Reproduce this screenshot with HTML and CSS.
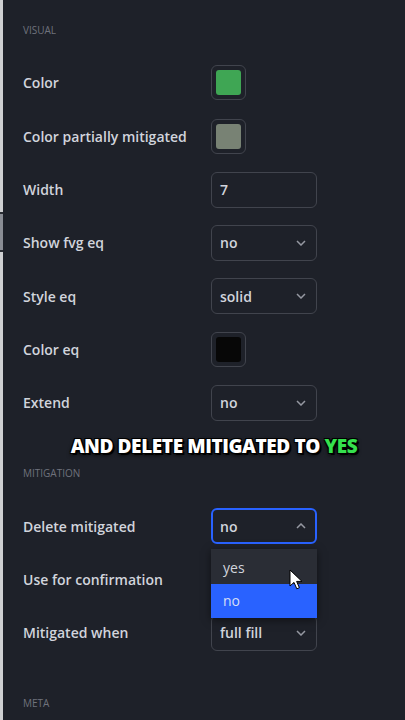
FILE: index.html
```html
<!DOCTYPE html>
<html>
<head>
<meta charset="utf-8">
<link rel="stylesheet" href="styles.css">
</head>
<body>
<div class="edge"><span class="edge-mark"></span></div>
<main class="panel">
  <section class="section">
    <div class="section-title">Visual</div>
    <div class="row"><span class="label">Color</span><span class="swatch"><span class="chip chip-green"></span></span></div>
    <div class="row"><span class="label">Color partially mitigated</span><span class="swatch"><span class="chip chip-grey"></span></span></div>
    <div class="row"><span class="label">Width</span><span class="field">7</span></div>
    <div class="row"><span class="label">Show fvg eq</span><span class="field select">no<svg class="chev" viewBox="0 0 10 6"><path d="M1 1l4 4 4-4"/></svg></span></div>
    <div class="row"><span class="label">Style eq</span><span class="field select">solid<svg class="chev" viewBox="0 0 10 6"><path d="M1 1l4 4 4-4"/></svg></span></div>
    <div class="row"><span class="label">Color eq</span><span class="swatch"><span class="chip chip-black"></span></span></div>
    <div class="row"><span class="label">Extend</span><span class="field select">no<svg class="chev" viewBox="0 0 10 6"><path d="M1 1l4 4 4-4"/></svg></span></div>
  </section>
  <section class="section">
    <div class="section-title">Mitigation</div>
    <div class="row"><span class="label">Delete mitigated</span>
      <span class="control">
        <span class="field select focused">no<svg class="chev" viewBox="0 0 10 6"><path d="M1 5l4-4 4 4"/></svg></span>
        <span class="menu">
          <span class="opt hover">yes</span>
          <span class="opt sel">no</span>
          <svg class="cursor" viewBox="0 0 14 21"><path d="M1 1v16l4-3.6 2.8 6.4 2.6-1.1-2.8-6.3h5.4z"/></svg>
        </span>
      </span>
    </div>
    <div class="row"><span class="label">Use for confirmation</span><span class="field select"></span></div>
    <div class="row"><span class="label">Mitigated when</span><span class="field select">full fill<svg class="chev" viewBox="0 0 10 6"><path d="M1 1l4 4 4-4"/></svg></span></div>
  </section>
  <section class="section">
    <div class="section-title">Meta</div>
  </section>
</main>
<div class="caption">AND DELETE MITIGATED TO <span class="yes">YES</span></div>
</body>
</html>
```
FILE: styles.css
```css
html, body {
  margin: 0;
  padding: 0;
  height: 720px;
  overflow: hidden;
  background: #1e2129;
}
body {
  font-family: "Open Sans", "DejaVu Sans", sans-serif;
  color: #d1d4dc;
  position: relative;
}
.edge {
  position: absolute;
  left: 0;
  top: 0;
  width: 3px;
  height: 720px;
  background: #cfd0d2;
}
.edge-mark {
  position: absolute;
  left: 0;
  top: 212px;
  width: 3px;
  height: 36px;
  background: #8a8d94;
  border-top: 2px solid #2a2d33;
  border-bottom: 2px solid #2a2d33;
}
.panel {
  padding: 22px 0 0 23px;
}
.section + .section {
  margin-top: 35.5px;
}
.section-title {
  font-size: 10px;
  line-height: 16px;
  height: 16px;
  text-transform: uppercase;
  color: #6f727c;
  margin-bottom: 18.33px;
}
.row {
  height: 53.33px;
  display: flex;
  align-items: center;
}
.label {
  width: 188px;
  font-size: 14px;
  font-weight: 600;
  color: #d1d4dc;
  white-space: nowrap;
}
.swatch {
  width: 35px;
  height: 35px;
  box-sizing: border-box;
  border: 1.5px solid #41444d;
  border-radius: 6px;
  display: flex;
  align-items: center;
  justify-content: center;
}
.chip {
  width: 25px;
  height: 25px;
  border-radius: 3px;
}
.chip-green { background: #3fa654; }
.chip-grey { background: #788274; }
.chip-black { background: #070707; }
.control {
  position: relative;
}
.field {
  width: 106px;
  height: 36px;
  box-sizing: border-box;
  border: 1px solid #41444d;
  border-radius: 6px;
  display: flex;
  align-items: center;
  padding: 0 10px 0 8px;
  font-size: 14px;
  font-weight: 600;
  color: #d1d4dc;
}
.select {
  justify-content: space-between;
}
.focused {
  border: 2px solid #2962ff;
  padding-left: 7px;
  padding-right: 9px;
}
.chev {
  width: 10px;
  height: 6px;
  fill: none;
  stroke: #9598a1;
  stroke-width: 1.5;
}
.menu {
  position: absolute;
  left: 0;
  top: 41px;
  width: 106px;
  display: flex;
  flex-direction: column;
  background: #2a2d35;
  box-shadow: 0 2px 8px rgba(0, 0, 0, 0.5);
  z-index: 2;
}
.opt {
  height: 34.5px;
  display: flex;
  align-items: center;
  padding-left: 12px;
  font-size: 14px;
  font-weight: 500;
  color: #d1d4dc;
}
.opt.hover {
  padding-top: 3px;
  box-sizing: border-box;
}
.opt.sel {
  background: #2962ff;
  color: #d6def6;
}
.cursor {
  position: absolute;
  left: 78px;
  top: 20px;
  width: 14px;
  height: 21px;
  fill: #ffffff;
  stroke: #000000;
  stroke-width: 1;
}
.caption {
  position: absolute;
  left: 0;
  width: 405px;
  top: 433px;
  text-align: center;
  padding-left: 23px;
  box-sizing: border-box;
  font-family: "Open Sans", sans-serif;
  font-weight: 800;
  font-size: 19px;
  line-height: 26px;
  letter-spacing: -0.4px;
  color: #ffffff;
  text-shadow: 2px 2px 0 #000, -1px -1px 0 #000, 1px -1px 0 #000, -1px 1px 0 #000, 0 2px 4px #000;
  z-index: 3;
}
.yes {
  color: #35e04e;
}
```
